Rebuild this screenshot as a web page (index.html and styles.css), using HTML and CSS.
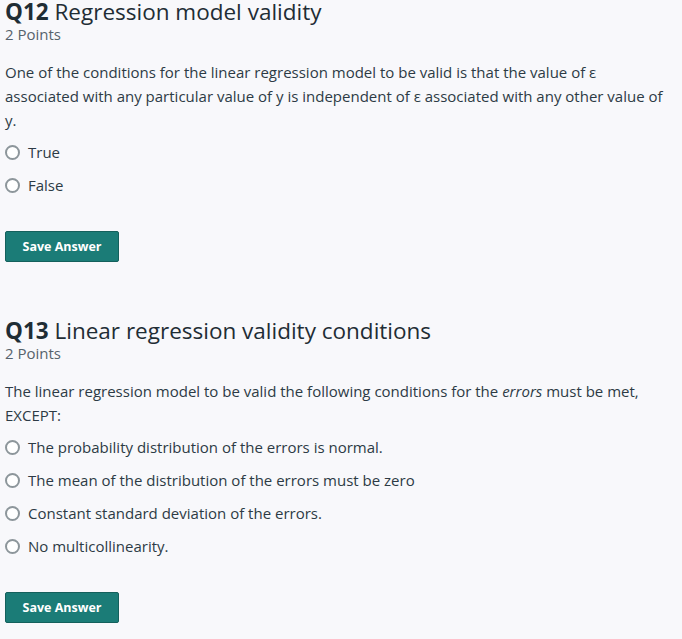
FILE: index.html
```html
<!DOCTYPE html>
<html>
<head>
<meta charset="utf-8">
<link rel="stylesheet" href="styles.css">
</head>
<body>
<div class="page">
  <section class="question">
    <h2 class="title"><b>Q12</b> Regression model validity</h2>
    <div class="points">2 Points</div>
    <p class="prompt">One of the conditions for the linear regression model to be valid is that the value of ε associated with any particular value of y is independent of ε associated with any other value of y.</p>
    <div class="options">
      <label class="option"><span class="radio"></span>True</label>
      <label class="option"><span class="radio"></span>False</label>
    </div>
    <button class="save">Save Answer</button>
  </section>
  <section class="question q2">
    <h2 class="title"><b>Q13</b> Linear regression validity conditions</h2>
    <div class="points">2 Points</div>
    <p class="prompt">The linear regression model to be valid the following conditions for the <i>errors</i> must be met, EXCEPT:</p>
    <div class="options">
      <label class="option"><span class="radio"></span>The probability distribution of the errors is normal.</label>
      <label class="option"><span class="radio"></span>The mean of the distribution of the errors must be zero</label>
      <label class="option"><span class="radio"></span>Constant standard deviation of the errors.</label>
      <label class="option"><span class="radio"></span>No multicollinearity.</label>
    </div>
    <button class="save">Save Answer</button>
  </section>
</div>
</body>
</html>
```
FILE: styles.css
```css
html, body {
  margin: 0;
  padding: 0;
  background: #f8f8fb;
}
.page {
  padding: 0 12px 0 5px;
  font-family: "Open Sans", "Liberation Sans", sans-serif;
  color: #2d3b45;
}
.question {
  display: flex;
  flex-direction: column;
  align-items: flex-start;
}
.q2 {
  margin-top: 57px;
}
.title {
  margin: 0;
  font-size: 22.5px;
  line-height: 24px;
  font-weight: 400;
  color: #1f2d35;
}
.title b {
  font-weight: 700;
}
.points {
  font-size: 15px;
  line-height: 20px;
  color: #56626c;
  margin-top: 0;
}
.prompt {
  margin: 16px 0 0 0;
  font-size: 15px;
  line-height: 24px;
}
.options {
  display: flex;
  flex-direction: column;
  gap: 13px;
  margin-top: 10px;
}
.option {
  display: flex;
  align-items: center;
  gap: 8px;
  font-size: 15px;
  line-height: 20px;
}
.radio {
  width: 11px;
  height: 11px;
  border: 2px solid #8d969b;
  border-radius: 50%;
  background: #fff;
  flex: none;
  margin-top: 1px;
}
.save {
  margin-top: 36px;
  width: 114px;
  height: 31px;
  background: #1b7c77;
  border: 1px solid #14605c;
  border-radius: 2px;
  color: #fff;
  font-family: "Open Sans", "Liberation Sans", sans-serif;
  font-size: 12.5px;
  font-weight: 700;
  padding: 0;
}
```
